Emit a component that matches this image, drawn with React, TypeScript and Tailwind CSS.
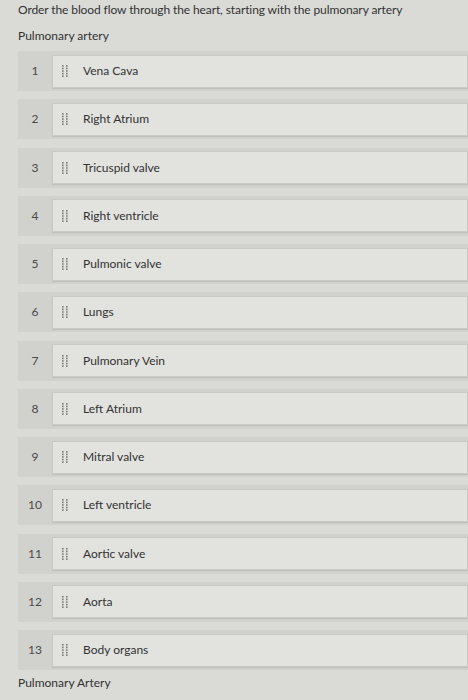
import { type FC } from 'react'

const STEPS: Array<string> = [
  'Vena Cava',
  'Right Atrium',
  'Tricuspid valve',
  'Right ventricle',
  'Pulmonic valve',
  'Lungs',
  'Pulmonary Vein',
  'Left Atrium',
  'Mitral valve',
  'Left ventricle',
  'Aortic valve',
  'Aorta',
  'Body organs',
]

// little dotted grip shown on each draggable answer
const DragHandle: FC = () => {
  const dots = []
  for (let r = 0; r < 5; r++) {
    for (let c = 0; c < 2; c++) {
      dots.push(<rect key={`${r}-${c}`} x={c * 4} y={r * 2.6} width="1.6" height="1.6" />)
    }
  }
  return (
    <svg width="6" height="12" viewBox="0 0 6 12" fill="#7a7a78" className="shrink-0">
      {dots}
    </svg>
  )
}

const App: FC = () => {
  return (
    <div className="min-h-[700px] w-[468px] overflow-hidden bg-[#dadad7] pl-[18px] pt-[1px] font-['Lato',sans-serif] text-[#333333]">
      <p className="text-[12px] leading-[18px] tracking-[-0.1px]">
        Order the blood flow through the heart, starting with the pulmonary artery
      </p>
      <p className="mt-[8px] text-[12px] leading-[18px]">Pulmonary artery</p>

      <ol className="mt-[6px] flex flex-col gap-[8.25px]">
        {STEPS.map((step, index) => {
          return (
            <li key={index} className="flex h-[40px] items-center bg-[#d1d1ce]">
              <span className="w-[34px] text-center text-[12px] text-[#4a4a4a]">{index + 1}</span>
              <div className="flex h-[33px] flex-1 items-center border border-[#c9c9c6] bg-[#e2e2df] pl-[9px] shadow-[0_1px_1px_rgba(0,0,0,0.08)]">
                <DragHandle />
                <span className="ml-[15px] text-[12px]">{step}</span>
              </div>
            </li>
          )
        })}
      </ol>

      <p className="mt-[4px] text-[12px] leading-[18px]">Pulmonary Artery</p>
    </div>
  )
}

export default App
